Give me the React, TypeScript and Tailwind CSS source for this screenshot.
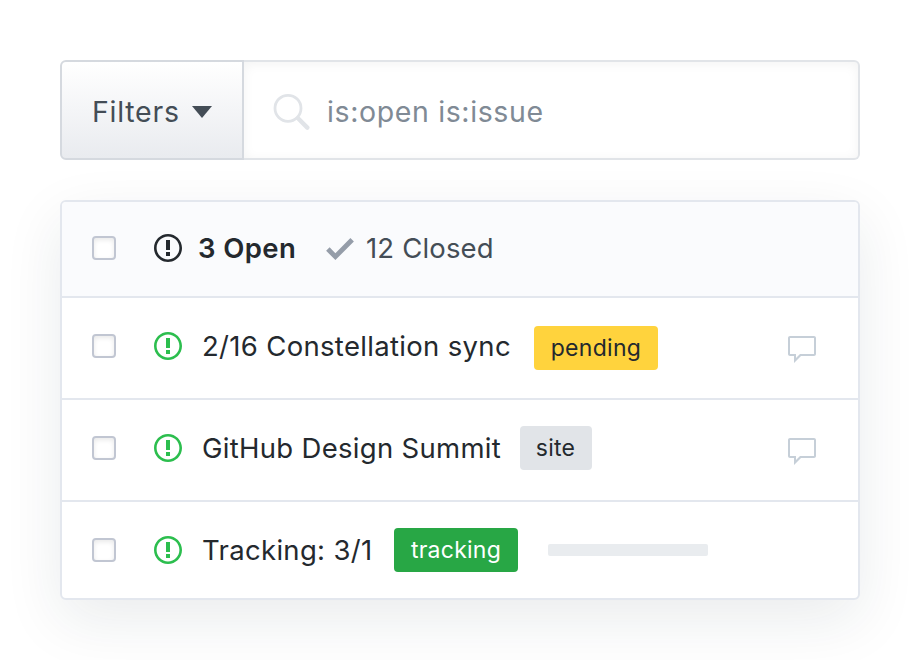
import React from "react";

function Checkbox() {
  return (
    <span className="h-6 w-6 shrink-0 rounded-[4px] border-2 border-[#c1c6d2] bg-white shadow-[inset_0_2px_5px_rgba(0,0,0,0.09)]" />
  );
}

function IssueIcon({ className }: { className: string }) {
  return (
    <svg viewBox="0 0 14 16" className={`ml-[38px] h-8 w-7 shrink-0 fill-current ${className}`}>
      <path d="M7 2.3c3.14 0 5.7 2.56 5.7 5.7s-2.56 5.7-5.7 5.7A5.71 5.71 0 011.3 8c0-3.14 2.56-5.7 5.7-5.7zM7 1C3.14 1 0 4.14 0 8s3.14 7 7 7 7-3.14 7-7-3.14-7-7-7zm1 3H6v5h2V4zm0 6H6v2h2v-2z" />
    </svg>
  );
}

function CommentIcon() {
  return (
    <svg viewBox="0 0 16 16" className="mt-2 mr-10 ml-auto h-8 w-8 shrink-0 fill-[#c6cfd8]">
      <path d="M14 1H2c-.55 0-1 .45-1 1v8c0 .55.45 1 1 1h2v3.5L7.5 11H14c.55 0 1-.45 1-1V2c0-.55-.45-1-1-1zm0 9H7l-2 2v-2H2V2h12v8z" />
    </svg>
  );
}

type RowProps = {
  title: string;
  titleClass: string;
  label: string;
  labelClass: string;
  rowClass: string;
  children: React.ReactNode;
};

function IssueRow({ title, titleClass, label, labelClass, rowClass, children }: RowProps) {
  return (
    <li className={`flex items-center pl-[30px] ${rowClass}`}>
      <Checkbox />
      <IssueIcon className="text-[#2cbe4e]" />
      <span className={`ml-5 shrink-0 text-[27.5px] leading-9 text-[#24292e] ${titleClass}`}>{title}</span>
      <span className={`flex h-11 shrink-0 items-center justify-center rounded-[4px] text-[23px] ${labelClass}`}>
        {label}
      </span>
      {children}
    </li>
  );
}

export default function App() {
  return (
    <main className="h-[660px] w-[920px] overflow-hidden bg-white px-[60px] pt-[60px] font-[Inter,'Liberation_Sans',sans-serif] whitespace-nowrap">
      <div className="flex h-[100px] w-[800px]">
        <button className="flex w-[184px] items-center rounded-l-[6px] border-2 border-[#d5d9df] bg-linear-to-b from-white to-[#e9ebef] pl-[30px] text-[28.5px] text-[#444d56]">
          <span className="w-[87px] shrink-0 pt-1 text-left leading-9 tracking-[0.75px]">Filters</span>
          <svg viewBox="0 0 20 12" className="mt-1 ml-[13px] h-3 w-5 shrink-0 fill-[#444d56]">
            <path d="M0 0h20L10 12z" />
          </svg>
        </button>
        <div className="flex flex-1 items-center rounded-r-[6px] border-2 border-l-0 border-[#e1e4e8] bg-white pl-7 shadow-[inset_0_2px_12px_rgba(0,0,0,0.05)]">
          <svg viewBox="0 0 40 40" className="h-10 w-10 shrink-0 fill-none stroke-[#e1e4e8]">
            <circle cx="16" cy="18.3" r="13" strokeWidth="2.8" />
            <path d="M26 28.3l9.3 9.3" strokeWidth="4.4" strokeLinecap="round" />
          </svg>
          <span className="ml-[15px] pt-1 text-[28.5px] leading-9 tracking-[0.62px] text-[#808a95]">is:open is:issue</span>
        </div>
      </div>

      <section className="mt-10 h-[400px] w-[800px] overflow-hidden rounded-[6px] border-2 border-[#e3e7ee] bg-white shadow-[0_20px_60px_rgba(27,40,50,0.09)]">
        <header className="flex h-24 items-center border-b-2 border-[#e3e7ee] bg-[#fafbfd] pb-0.5 pl-[30px]">
          <Checkbox />
          <IssueIcon className="text-[#24292e]" />
          <span className="ml-4 w-[128px] shrink-0 text-[27.5px] leading-9 font-semibold tracking-[0.4px] text-[#24292e]">3 Open</span>
          <svg viewBox="0 0 12 16" className="mt-px h-[37px] w-7 shrink-0 fill-[#959da9]">
            <path d="M12 5l-8 8-4-4 1.5-1.5L4 10l6.5-6.5L12 5z" />
          </svg>
          <span className="ml-3 text-[27.5px] leading-9 tracking-[0.16px] text-[#444d56]">12 Closed</span>
        </header>
        <ul>
          <IssueRow
            title="2/16 Constellation sync"
            titleClass="w-[332px] tracking-[0.32px]"
            label="pending"
            labelClass="mt-1 w-[124px] bg-[#ffd33d] text-[#24292e] tracking-[0.3px]"
            rowClass="h-[102px] border-b-2 border-[#e3e7ee] pb-1"
          >
            <CommentIcon />
          </IssueRow>
          <IssueRow
            title="GitHub Design Summit"
            titleClass="w-[318px] tracking-[0.3px]"
            label="site"
            labelClass="w-[72px] bg-[#e1e4e8] pr-px text-[#24292e] tracking-[0.3px]"
            rowClass="h-[102px] border-b-2 border-[#e3e7ee] pb-1"
          >
            <CommentIcon />
          </IssueRow>
          <IssueRow
            title="Tracking: 3/1"
            titleClass="w-[192px] tracking-[0.32px]"
            label="tracking"
            labelClass="w-[124px] bg-[#28a745] text-white tracking-[0.25px]"
            rowClass="h-24"
          >
            <span className="ml-[30px] h-3 w-40 rounded-[2px] bg-[#e9ecef]" />
          </IssueRow>
        </ul>
      </section>
    </main>
  );
}
